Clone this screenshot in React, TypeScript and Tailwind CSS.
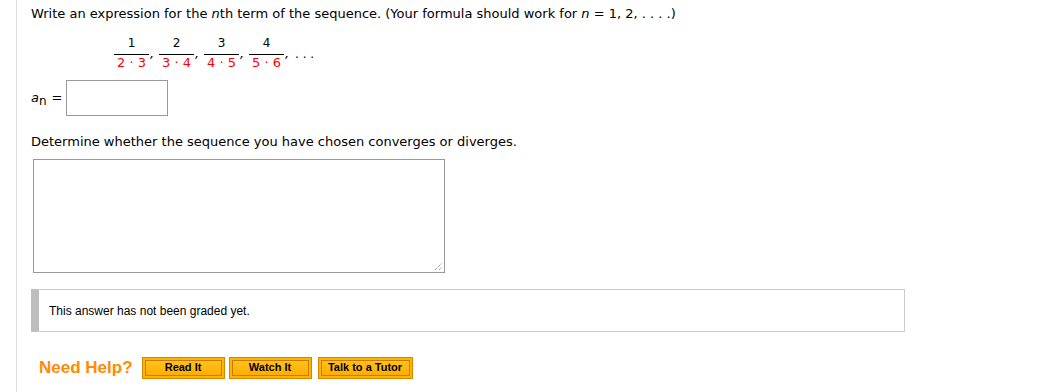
import React from "react";

const Frac = ({ n, a, b }: { n: string; a: string; b: string }) => (
  <span className="inline-flex items-start">
    <span className="inline-flex flex-col items-center w-[35px]">
      <span className="text-[12px] leading-[15px] text-black">{n}</span>
      <span className="border-t border-black w-full mt-[3px]" />
      <span className="text-[13px] leading-[15px] text-[#ff0000] mt-[0px]">
        {a} · {b}
      </span>
    </span>
    <span className="text-[13px] leading-[15px] mt-[10px] ml-[1px] w-[9px] italic">,</span>
  </span>
);

const Btn = ({ label, w }: { label: string; w: string }) => (
  <div className={`${w} h-[22px] border border-[#d88400] bg-[#ffb400] p-[2px]`}>
    <div className="w-full h-full border border-[#c97a00] bg-gradient-to-b from-[#ffc21a] to-[#ffae00] flex items-center justify-center text-[11px] font-bold text-black leading-none" style={{ fontFamily: '"Liberation Sans", Arial, sans-serif' }}>
      {label}
    </div>
  </div>
);

export default function App() {
  return (
    <div className="w-[1061px] h-[392px] bg-white relative overflow-hidden" style={{ fontFamily: '"DejaVu Sans", Verdana, sans-serif' }}>
      <div className="absolute left-[16px] top-0 bottom-0 w-px bg-[#dcdcdc]" />
      <div className="pl-[31px] pt-[6px] text-[13px] text-black">
        <div className="leading-[16px]">
          Write an expression for the <i>n</i>th term of the sequence. (Your formula should work for <i>n</i> = 1, 2, . . . .)
        </div>
        <div className="pl-[83px] mt-[14px] flex items-start">
          <Frac n="1" a="2" b="3" />
          <Frac n="2" a="3" b="4" />
          <Frac n="3" a="4" b="5" />
          <Frac n="4" a="5" b="6" />
          <span className="text-[12px] leading-[15px] mt-[11px] ml-[1px]">. . .</span>
        </div>
        <div className="mt-[10px] flex items-center">
          <span className="text-[13px]">
            <i>a</i>
            <sub className="text-[12px] relative top-[3px]">n</sub>
            <span className="ml-[5px]">=</span>
          </span>
          <div className="ml-[4px] w-[102px] h-[36px] border border-[#999]" />
        </div>
        <div className="mt-[18px] leading-[16px]">Determine whether the sequence you have chosen converges or diverges.</div>
        <div className="mt-[9px] ml-[2px] w-[412px] h-[114px] border border-[#999] relative">
          <svg className="absolute right-[1px] bottom-[1px]" width="9" height="9" viewBox="0 0 9 9">
            <line x1="1" y1="8" x2="8" y2="1" stroke="#777" strokeWidth="1" strokeDasharray="1 1" />
            <line x1="5" y1="8" x2="8" y2="5" stroke="#777" strokeWidth="1" strokeDasharray="1 1" />
          </svg>
        </div>
        <div className="mt-[16px] w-[874px] h-[43px] border border-[#cccccc] border-l-[8px] border-l-[#bdbdbd] flex items-center pl-[10px] text-[12px]" style={{ fontFamily: '"Liberation Sans", Arial, sans-serif' }}>
          This answer has not been graded yet.
        </div>
        <div className="mt-[23px] ml-[8px] flex items-center">
          <span className="text-[17px] font-bold text-[#ff8c00] mr-[9px]" style={{ fontFamily: '"Liberation Sans", Arial, sans-serif' }}>Need Help?</span>
          <div className="flex gap-[4px]">
            <Btn label="Read It" w="w-[83px]" />
            <Btn label="Watch It" w="w-[83px]" />
            <div className="ml-[2px]"><Btn label="Talk to a Tutor" w="w-[95px]" /></div>
          </div>
        </div>
      </div>
    </div>
  );
}
